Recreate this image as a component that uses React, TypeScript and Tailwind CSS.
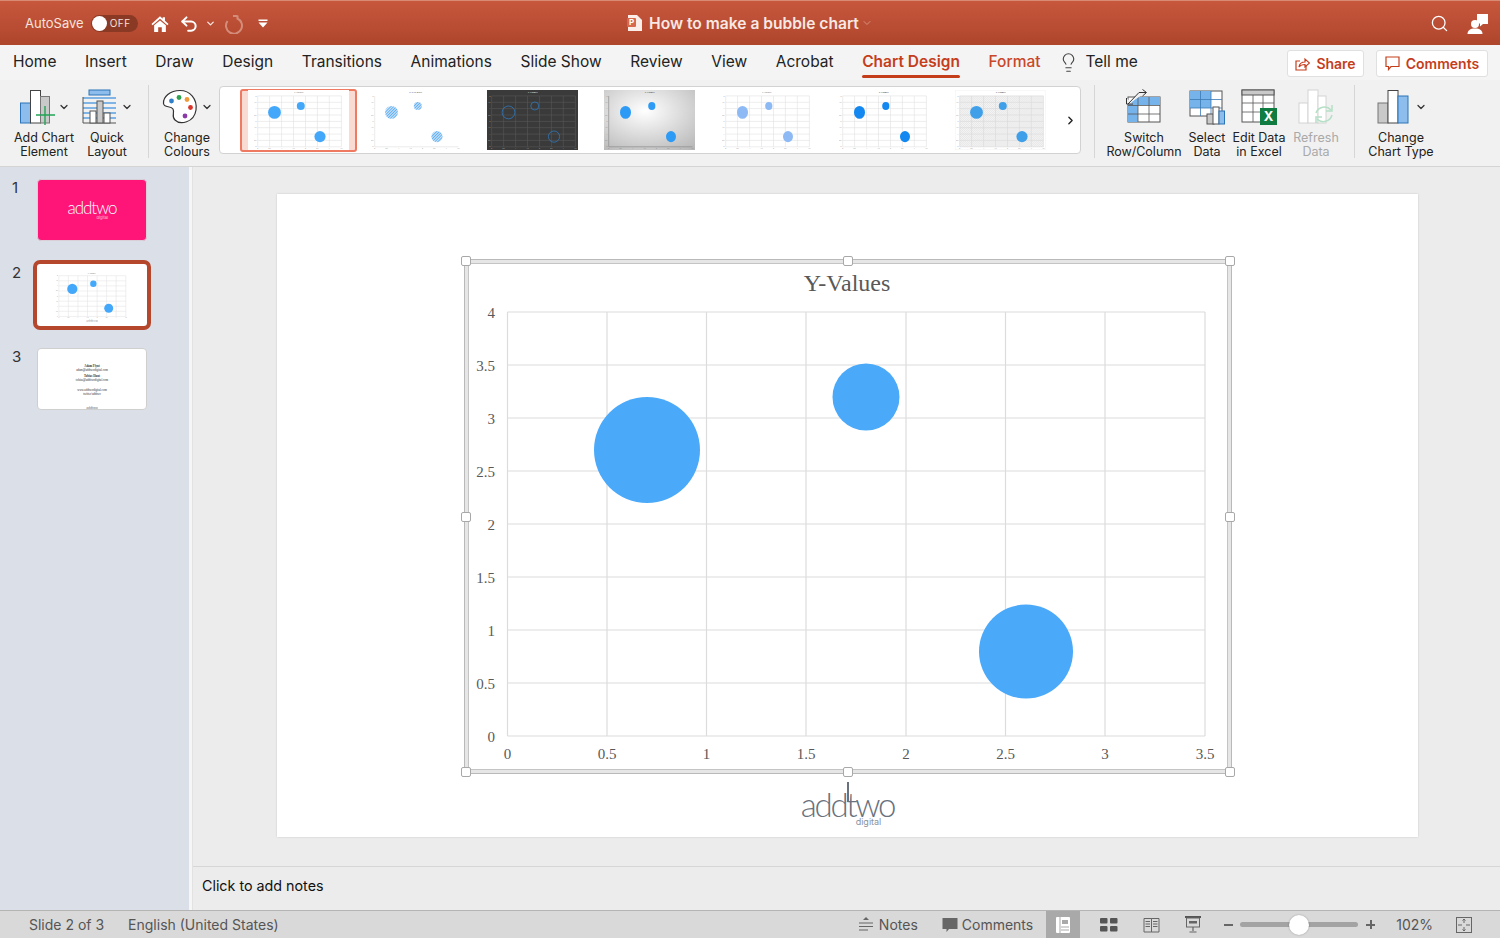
import { ChevronDown, ChevronRight, Lightbulb, Search, Undo2 } from 'lucide-react';
import type { ReactNode } from 'react';

const tabs = ['Home', 'Insert', 'Draw', 'Design', 'Transitions', 'Animations', 'Slide Show', 'Review', 'View', 'Acrobat'];

type Variant = 'plain' | 'hatch' | 'dark' | 'gradient' | 'soft' | 'deep' | 'pattern';

function MiniChart({ variant = 'plain', className = 'w-[91px] h-[60px]' }: { variant?: Variant; className?: string }) {
  const xs = [4.7, 16.6, 28.6, 40.5, 52.5, 64.4, 76.3, 88.4];
  const ys = [5.9, 12.3, 18.6, 25, 31.4, 37.7, 44.1, 50.4, 56.8];
  const dark = variant === 'dark';
  const grid = dark ? '#585858' : variant === 'pattern' ? '#d8d8d8' : '#e0e0e0';
  const text = dark ? '#ccc' : '#777';
  const fills: Record<Variant, string> = {
    plain: '#44a8fa',
    hatch: 'url(#hatchFill)',
    dark: 'none',
    gradient: '#2d9bf5',
    soft: '#8db9f5',
    deep: '#1388f0',
    pattern: '#3f9fe8',
  };
  const stroke = dark ? '#2f78bd' : 'none';
  const narrow = variant === 'gradient' || variant === 'soft' || variant === 'deep';
  return (
    <svg viewBox="0 0 91 60" className={`${className} block`}>
      <defs>
        <pattern id="hatchFill" width="2" height="2" patternUnits="userSpaceOnUse" patternTransform="rotate(45)">
          <rect width="2" height="2" fill="#d3e8fb" />
          <rect width="1" height="2" fill="#62aef2" />
        </pattern>
        <radialGradient id="greyFill" cx="0.45" cy="0.35" r="0.85">
          <stop offset="0" stopColor="#ffffff" />
          <stop offset="1" stopColor="#b4b4b4" />
        </radialGradient>
        <pattern id="dotFill" width="1.4" height="1.4" patternUnits="userSpaceOnUse" patternTransform="rotate(45)">
          <rect width="1.4" height="1.4" fill="#f4f4f4" />
          <rect width="0.5" height="1.4" fill="#e2e2e2" />
        </pattern>
      </defs>
      {dark && <rect width="91" height="60" fill="#3a3a3a" />}
      {variant === 'gradient' && <rect width="91" height="60" fill="url(#greyFill)" />}
      {variant === 'pattern' && <rect x="0.200" y="0.200" width="90.600" height="59.600" fill="#fff" stroke="#eeeeee" strokeWidth="0.400" />}
      {variant === 'pattern' && <rect x="4.700" y="5.900" width="83.700" height="50.900" fill="url(#dotFill)" />}
      {variant !== 'hatch' &&
        variant !== 'gradient' &&
        xs.map((x) => <line key={x} x1={x} x2={x} y1="5.900" y2="56.800" stroke={grid} strokeWidth="0.600" />)}
      {variant !== 'hatch' &&
        variant !== 'gradient' &&
        ys.map((y) => <line key={y} x1="4.700" x2="88.400" y1={y} y2={y} stroke={grid} strokeWidth="0.600" />)}
      {(variant === 'hatch' || variant === 'gradient') && (
        <path d="M4.700 5.900V56.800H88.400" fill="none" stroke={variant === 'gradient' ? '#8c8c8c' : '#e2e2e2'} strokeWidth="0.700" />
      )}
      <ellipse cx="21.500" cy="22.400" rx={narrow ? 5.500 : 6.400} ry="6.400" fill={fills[variant]} stroke={stroke} strokeWidth="0.800" />
      <ellipse cx="47.800" cy="16" rx={narrow ? 3.600 : 4} ry="4" fill={fills[variant]} stroke={stroke} strokeWidth="0.800" />
      <ellipse cx="67" cy="46.600" rx={narrow ? 5 : 5.600} ry="5.600" fill={fills[variant]} stroke={stroke} strokeWidth="0.800" />
      <text x="45.500" y="3.400" textAnchor="middle" fontSize="2.700" fontWeight={variant === 'plain' || variant === 'soft' ? 400 : 700} fill={dark ? '#ddd' : '#555'} fontFamily="'Liberation Serif', serif">
        {variant === 'hatch' ? 'Y-VALUES' : 'Y-Values'}
      </text>
      {['0', '0.5', '1', '1.5', '2', '2.5', '3', '3.5'].map((label, i) => (
        <text key={label} x={xs[i]} y="59.200" textAnchor="middle" fontSize="1.800" fill={text} fontFamily="'Liberation Serif', serif">
          {label}
        </text>
      ))}
      {['4', '3.5', '3', '2.5', '2', '1.5', '1', '0.5', '0'].map((label, i) => (
        <text key={label} x="3.400" y={ys[i] + 0.600} textAnchor="end" fontSize="1.800" fill={text} fontFamily="'Liberation Serif', serif">
          {label}
        </text>
      ))}
    </svg>
  );
}

function AddChartIcon() {
  return (
    <svg width="36" height="36" viewBox="0 0 36 36">
      <rect x="1.500" y="14" width="10" height="20" fill="#8dbdec" stroke="#2b74b8" />
      <rect x="11.500" y="1.500" width="10" height="32.500" fill="#fff" stroke="#444" />
      <rect x="21.500" y="7.500" width="9" height="26.500" fill="#c9c9c9" stroke="#777" />
      <path d="M26 17V36M17 26H36" stroke="#23a455" strokeWidth="1.400" />
    </svg>
  );
}

function QuickLayoutIcon() {
  return (
    <svg width="36" height="36" viewBox="0 0 36 36">
      <rect x="7" y="1" width="21" height="5" fill="#8dbdec" stroke="#2b74b8" />
      <path d="M1 9H34M1 14H34M1 19H34M1 24H34M1 29H34" stroke="#5aa0e0" strokeWidth="1.600" />
      <path d="M1 8V34H34" fill="none" stroke="#555" />
      <rect x="8" y="22" width="6" height="12" fill="#fff" stroke="#555" />
      <rect x="15" y="12" width="6" height="22" fill="#c9c9c9" stroke="#555" />
      <rect x="22" y="24" width="6" height="10" fill="#fff" stroke="#555" />
    </svg>
  );
}

function PaletteIcon() {
  return (
    <svg width="36" height="36" viewBox="0 0 36 36">
      <path
        d="M18 1.500C8 1.500 1 8 1.500 14.500C2 19 9 16.500 11 20C13 24 9 27 13 31C18 36 32 34 34 21C35.500 10 28 1.500 18 1.500Z"
        fill="#fff"
        stroke="#333"
        strokeWidth="1.200"
      />
      <circle cx="9.500" cy="12" r="2.400" fill="#2f80c8" />
      <circle cx="17" cy="8.500" r="2.400" fill="#2ea24f" />
      <circle cx="25" cy="10.500" r="2.400" fill="#f09a3a" />
      <circle cx="28.500" cy="18.500" r="2.400" fill="#d9342b" />
      <circle cx="23" cy="27" r="2.400" fill="#8a3aa8" />
    </svg>
  );
}

function SwitchIcon() {
  return (
    <svg width="36" height="36" viewBox="0 0 36 36">
      <rect x="2" y="8" width="32" height="25" fill="#fff" stroke="#555" />
      <path d="M12 8H34V16H12ZM2 25H12V33H2Z" fill="#76b3ea" />
      <path d="M2 16L12 8V25H2Z" fill="#76b3ea" />
      <path d="M2 16.500H34M2 25H34M12 8V33M23 8V33" stroke="#555" strokeWidth="0.800" />
      <path d="M2 15L13 3.500H20M16.500 0.500L20.500 3.500L16.500 7M0.500 9V15H7" fill="#f1f1f1" stroke="#333" strokeWidth="1" />
    </svg>
  );
}

function SelectDataIcon() {
  return (
    <svg width="36" height="36" viewBox="0 0 36 36">
      <rect x="1" y="2" width="32" height="25" fill="#fff" stroke="#555" />
      <rect x="1" y="2" width="21" height="17" fill="#76b3ea" />
      <path d="M1 10.500H33M1 19H33M11.500 2V27M22 2V27" stroke="#3b78b4" strokeWidth="0.800" />
      <rect x="18" y="25" width="7" height="10" fill="#c9c9c9" stroke="#555" />
      <rect x="24" y="18" width="6" height="17" fill="#fff" stroke="#555" />
      <rect x="30" y="22" width="5.500" height="13" fill="#8dbdec" stroke="#2b74b8" />
    </svg>
  );
}

function ExcelIcon() {
  return (
    <svg width="36" height="36" viewBox="0 0 36 36">
      <rect x="1" y="1" width="32" height="32" fill="#fff" stroke="#555" />
      <rect x="1" y="1" width="32" height="5" fill="#c9c9c9" stroke="#555" />
      <path d="M1 14H33M1 23H33M12 6V33M22 6V33" stroke="#555" strokeWidth="0.800" />
      <rect x="19" y="19" width="17" height="17" fill="#107c41" />
      <text x="27.500" y="32" fontSize="13" fontWeight="700" fill="#fff" textAnchor="middle" fontFamily="Inter, sans-serif">
        X
      </text>
    </svg>
  );
}

function RefreshIcon() {
  return (
    <svg width="36" height="36" viewBox="0 0 36 36">
      <rect x="1" y="14" width="9" height="20" fill="#fff" stroke="#d4d4d4" />
      <rect x="10" y="1" width="10" height="33" fill="#fff" stroke="#d4d4d4" />
      <rect x="20" y="7" width="8" height="27" fill="#fff" stroke="#d4d4d4" />
      <path d="M18 24A9 9 0 0 1 33 21M34 26A9 9 0 0 1 19 30" fill="none" stroke="#b5e0c6" strokeWidth="1.500" />
      <path d="M34 16V22H28M18 34V28H24" fill="none" stroke="#b5e0c6" strokeWidth="1.500" />
    </svg>
  );
}

function ChartTypeIcon() {
  return (
    <svg width="36" height="36" viewBox="0 0 36 36">
      <rect x="2" y="14" width="10" height="20" fill="#c9c9c9" stroke="#777" />
      <rect x="12" y="1.500" width="10" height="32.500" fill="#fff" stroke="#444" />
      <rect x="22" y="7" width="10" height="27" fill="#8dbdec" stroke="#2b74b8" />
    </svg>
  );
}

function RibbonItem({ icon, lines, width, more, muted }: { icon: ReactNode; lines: string[]; width: string; more?: boolean; muted?: boolean }) {
  return (
    <div className={`flex flex-col items-center pt-[9px] shrink-0 ${width}`}>
      <div className="flex items-center h-[36px]">
        {icon}
        {more && <ChevronDown className="w-[12px] h-[12px] ml-[3px] text-[#333]" strokeWidth={2.500} />}
      </div>
      <div className={`mt-[6px] text-center text-[12.500px] leading-[14px] whitespace-nowrap ${muted ? 'text-[#a9a9a9]' : 'text-[#222]'}`}>
        {lines.map((line) => (
          <div key={line}>{line}</div>
        ))}
      </div>
    </div>
  );
}

function Separator({ className }: { className: string }) {
  return <div className={`w-px h-[73px] mt-[5px] bg-[#d6d6d6] shrink-0 ${className}`} />;
}

function TitleBar() {
  return (
    <div className="grid grid-cols-[1fr_auto_1fr] items-center h-[45px] shrink-0 pt-[1px] bg-gradient-to-b from-[#c7573d] to-[#ae462c] border-t border-[#d98a75] text-white">
      <div className="flex items-center pl-[25px]">
        <span className="text-[13px] text-[#f5e3de]">AutoSave</span>
        <div className="flex items-center ml-[7px] w-[47px] h-[17px] rounded-full bg-[#8a3925] pl-[1px]">
          <div className="w-[15px] h-[15px] rounded-full bg-white" />
          <span className="ml-[3px] text-[10px] tracking-[0.5px] text-[#f5e3de]">OFF</span>
        </div>
        <svg width="18" height="18" viewBox="0 0 20 19" className="ml-[13px]">
          <path d="M10 1L0.500 9.500L1.800 11L10 3.800L18.200 11L19.500 9.500L15.500 6V2H13V3.800Z" fill="#fff" />
          <path d="M3.500 11L10 5.500L16.500 11V18.500H12V13H8V18.500H3.500Z" fill="#fff" />
        </svg>
        <Undo2 className="ml-[10px] w-[20px] h-[20px] text-white" strokeWidth={2.400} />
        <ChevronDown className="ml-[6px] w-[11px] h-[11px] text-[#f5e3de]" strokeWidth={3} />
        <svg width="20" height="20" viewBox="0 0 20 20" className="ml-[8px]">
          <path d="M3.500 7A8 8 0 1 0 13.500 4.500M13.500 1.500V5.500M13.500 2H9" fill="none" stroke="#d58d7b" strokeWidth="2" />
        </svg>
        <svg width="10" height="9" viewBox="0 0 10 9" className="ml-[14px]">
          <path d="M0.500 0.500H9.500V2H0.500ZM0.500 3.500H9.500L5 8.500Z" fill="#fff" />
        </svg>
      </div>
      <div className="flex items-center">
        <svg width="16" height="18" viewBox="0 0 16 18">
          <path d="M1 1H10L15 6V17H1Z" fill="#fbeee9" />
          <rect x="0" y="4" width="9" height="9" rx="1" fill="#d9694c" />
          <text x="4.500" y="11" fontSize="8" fontWeight="700" fill="#fff" textAnchor="middle" fontFamily="Inter, sans-serif">
            P
          </text>
        </svg>
        <span className="ml-[6px] text-[15.600px] font-semibold text-[#f8e8e3]">How to make a bubble chart</span>
        <ChevronDown className="ml-[2px] w-[12px] h-[12px] text-[#d9917f]" strokeWidth={2} />
      </div>
      <div className="flex items-center justify-end pr-[11px]">
        <Search className="w-[19px] h-[19px] text-white" strokeWidth={1.600} />
        <svg width="22" height="22" viewBox="0 0 22 22" className="ml-[18px]">
          <path d="M10 1H21V11H16L13 13.500V10.500H10Z" fill="#fff" />
          <circle cx="8" cy="11" r="4" fill="#fff" />
          <path d="M0.500 21C0.500 17.500 3 15.500 8 15.500C13 15.500 15.500 17.500 15.500 21Z" fill="#fff" />
        </svg>
      </div>
    </div>
  );
}

function TabRow() {
  return (
    <div className="flex items-start h-[35px] shrink-0 pl-[13px] pr-[12px] bg-[#f4f4f4]">
      <div className="flex items-center gap-[28.600px] h-[34px] text-[15.500px] text-[#222]">
        {tabs.map((tab) => (
          <span key={tab}>{tab}</span>
        ))}
        <span className="relative font-semibold text-[#c43e1c]">
          Chart Design
          <span className="absolute left-0 right-0 -bottom-[4px] h-[3px] rounded-full bg-[#c43e1c]" />
        </span>
        <span className="font-medium text-[#c9472a]">Format</span>
      </div>
      <div className="flex items-center h-[34px] ml-[18px] text-[15.500px] text-[#222]">
        <Lightbulb className="w-[21px] h-[21px] text-[#444]" strokeWidth={1.300} />
        <span className="ml-[6px]">Tell me</span>
      </div>
      <div className="flex gap-[12px] ml-auto mt-[5px]">
        <button className="flex items-center justify-center w-[77px] h-[27px] rounded-[3px] bg-white border border-[#e0e0e0] text-[14px] font-semibold text-[#c43e1c]">
          <svg width="15" height="14" viewBox="0 0 15 14" className="mr-[6px]">
            <path d="M5 4H1V13H11V9" fill="none" stroke="#c43e1c" strokeWidth="1.200" />
            <path d="M4 10C4.500 6.500 7 5 10 5V2L14.500 6L10 10V7.500C7.500 7.500 5.500 8 4 10Z" fill="none" stroke="#c43e1c" strokeWidth="1.200" />
          </svg>
          Share
        </button>
        <button className="flex items-center justify-center w-[112px] h-[27px] rounded-[3px] bg-white border border-[#e0e0e0] text-[14px] font-semibold text-[#c43e1c]">
          <svg width="15" height="15" viewBox="0 0 15 15" className="mr-[6px]">
            <path d="M1 1H14V10.500H6L3.500 13.500V10.500H1Z" fill="none" stroke="#c43e1c" strokeWidth="1.200" />
          </svg>
          Comments
        </button>
      </div>
    </div>
  );
}

function Gallery() {
  const rest: Variant[] = ['hatch', 'dark', 'gradient', 'soft', 'deep', 'pattern'];
  return (
    <div className="flex items-center ml-[3px] mt-[6px] w-[862px] h-[68px] shrink-0 pl-[20px] rounded-[4px] bg-white border border-[#d2d2d2]">
      <div className="flex items-center justify-center w-[117px] h-[63px] rounded-[3px] border-2 border-[#ee7a62] bg-[#f9dbd4]">
        <div className="bg-white px-[5px]">
          <MiniChart />
        </div>
      </div>
      {rest.map((variant) => (
        <div key={variant} className="flex items-center justify-center w-[117px]">
          <MiniChart variant={variant} />
        </div>
      ))}
      <ChevronRight className="ml-[5px] w-[13px] h-[13px] text-[#222]" strokeWidth={2.500} />
    </div>
  );
}

function Ribbon() {
  return (
    <div className="flex items-start h-[87px] shrink-0 pl-[10px] bg-[#f1f1f1] border-b border-[#d4d4d4]">
      <RibbonItem icon={<AddChartIcon />} lines={['Add Chart', 'Element']} width="w-[68px]" more />
      <RibbonItem icon={<QuickLayoutIcon />} lines={['Quick', 'Layout']} width="w-[58px]" more />
      <Separator className="ml-[12px]" />
      <RibbonItem icon={<PaletteIcon />} lines={['Change', 'Colours']} width="w-[58px] ml-[9px]" more />
      <Gallery />
      <Separator className="ml-[13px]" />
      <RibbonItem icon={<SwitchIcon />} lines={['Switch', 'Row/Column']} width="w-[80px] ml-[9px]" />
      <RibbonItem icon={<SelectDataIcon />} lines={['Select', 'Data']} width="w-[46px]" />
      <RibbonItem icon={<ExcelIcon />} lines={['Edit Data', 'in Excel']} width="w-[58px]" />
      <RibbonItem icon={<RefreshIcon />} lines={['Refresh', 'Data']} width="w-[56px]" muted />
      <Separator className="ml-[10px]" />
      <RibbonItem icon={<ChartTypeIcon />} lines={['Change', 'Chart Type']} width="w-[64px] ml-[14px]" more />
    </div>
  );
}

function Sidebar() {
  return (
    <div className="flex flex-col gap-[22.500px] w-[189px] shrink-0 pt-[12px] bg-[#dbdfe8]">
      <div className="flex">
        <span className="w-[37px] pl-[12px] text-[15px] leading-[18px] text-[#333]">1</span>
        <div className="flex flex-col items-center justify-center w-[110px] h-[62px] rounded-[4px] bg-[#ff1478] border border-[#d9cfd6] text-white">
          <span className="font-['Lato',sans-serif] font-light text-[17px] leading-[16px] tracking-[-1px]">addtwo</span>
          <span className="self-end mr-[38px] text-[4px] leading-[4px] text-[#ffc4dc]">digital</span>
        </div>
      </div>
      <div className="flex">
        <span className="w-[37px] pl-[12px] text-[15px] leading-[18px] text-[#333]">2</span>
        <div className="flex flex-col w-[110px] h-[62px] pt-[7px] pl-[18px] rounded-[3px] bg-white outline-[4px] outline-solid outline-[#b5482c] overflow-hidden">
          <MiniChart className="w-[73px] h-[48px]" />
          <span className="self-center pr-[18px] font-['Lato',sans-serif] font-light text-[3.500px] leading-[4px] text-[#68717d]">addtwo</span>
        </div>
      </div>
      <div className="flex">
        <span className="w-[37px] pl-[12px] text-[15px] leading-[18px] text-[#333]">3</span>
        <div className="flex flex-col items-center w-[110px] h-[62px] pt-[16px] rounded-[4px] bg-white border border-[#cfcfcf] text-[3px] leading-[3.500px] text-[#333] font-['Liberation_Serif',serif]">
          <span className="font-bold">Adam Flynt</span>
          <span>adam@addtwodigital.com</span>
          <span className="font-bold mt-[3px]">Tobias Hunt</span>
          <span>tobias@addtwodigital.com</span>
          <span className="mt-[7px]">www.addtwodigital.com</span>
          <span>twitter/addtwo</span>
          <span className="mt-[11px] font-['Lato',sans-serif] text-[3.500px] text-[#68717d]">addtwo</span>
        </div>
      </div>
    </div>
  );
}

function BubbleChart() {
  const xs = [507.5, 607, 706.5, 806, 906, 1005.5, 1105, 1205];
  const ys = [312, 365, 418, 471, 524, 577, 630, 683, 736];
  const xLabels = ['0', '0.5', '1', '1.5', '2', '2.5', '3', '3.5'];
  const yLabels = ['4', '3.5', '3', '2.5', '2', '1.5', '1', '0.5', '0'];
  return (
    <svg viewBox="469 264 758 505" className="w-[758px] h-[505px] block">
      <text x="847" y="291" textAnchor="middle" fontSize="24" fill="#595959" fontFamily="'Liberation Serif', serif">
        Y-Values
      </text>
      {xs.map((x) => (
        <line key={x} x1={x} x2={x} y1="312" y2="736" stroke="#dcdcdc" strokeWidth="1.200" />
      ))}
      {ys.map((y) => (
        <line key={y} x1="507.5" x2="1205" y1={y} y2={y} stroke="#dcdcdc" strokeWidth="1.200" />
      ))}
      <circle cx="647" cy="450" r="53" fill="#4aa9f9" />
      <circle cx="866" cy="397" r="33.500" fill="#4aa9f9" />
      <circle cx="1026" cy="651.500" r="47" fill="#4aa9f9" />
      {yLabels.map((label, i) => (
        <text key={label} x="495" y={ys[i] + 6} textAnchor="end" fontSize="15" fill="#595959" fontFamily="'Liberation Serif', serif">
          {label}
        </text>
      ))}
      {xLabels.map((label, i) => (
        <text key={label} x={xs[i]} y="759" textAnchor="middle" fontSize="15" fill="#595959" fontFamily="'Liberation Serif', serif">
          {label}
        </text>
      ))}
    </svg>
  );
}

function Handle({ className }: { className: string }) {
  return <div className={`absolute w-[10px] h-[10px] rounded-[2px] bg-white border border-[#a8a8a8] ${className}`} />;
}

function Slide() {
  return (
    <div className="flex flex-col items-center w-[1141px] h-[643px] ml-[84px] mt-[27px] pt-[65px] bg-white shadow-[0_0_2px_rgba(0,0,0,0.15)]">
      <div className="relative w-[768px] h-[515px] p-[3px] bg-[#e6e6e6] border border-[#b9b9b9]">
        <div className="bg-white border border-[#c4c4c4]">
          <BubbleChart />
        </div>
        <Handle className="-left-[4px] -top-[4px]" />
        <Handle className="left-1/2 -translate-x-1/2 -top-[4px]" />
        <Handle className="-right-[4px] -top-[4px]" />
        <Handle className="-left-[4px] top-1/2 -translate-y-1/2" />
        <Handle className="-right-[4px] top-1/2 -translate-y-1/2" />
        <Handle className="-left-[4px] -bottom-[4px]" />
        <Handle className="left-1/2 -translate-x-1/2 -bottom-[4px]" />
        <Handle className="-right-[4px] -bottom-[4px]" />
      </div>
      <div className="relative flex flex-col items-center mt-[17px] text-[#68717d]">
        <span className="font-['Lato',sans-serif] font-light text-[33px] leading-[27px] tracking-[-2.300px]">addtwo</span>
        <span className="ml-[42px] text-[9px] leading-[8px] text-[#8a929c]">digital</span>
        <span className="absolute left-1/2 -top-[9px] w-[1.500px] h-[20px] bg-[#68717d]" />
      </div>
    </div>
  );
}

function StatusBar() {
  return (
    <div className="flex items-center h-[28px] shrink-0 pl-[29px] bg-[#d9d9d9] border-t border-[#b4b4b4] text-[14px] text-[#555]">
      <span>Slide 2 of 3</span>
      <span className="ml-[24px]">English (United States)</span>
      <div className="flex items-center h-full ml-auto">
        <svg width="16" height="15" viewBox="0 0 16 15">
          <path d="M8 0L11 3H5Z" fill="#666" />
          <path d="M1 6H15M1 9.500H15M1 13H10" stroke="#666" strokeWidth="1.200" />
        </svg>
        <span className="ml-[5px]">Notes</span>
        <svg width="16" height="16" viewBox="0 0 16 16" className="ml-[24px]">
          <path d="M0.500 1H15.500V12H7L4.500 15V12H0.500Z" fill="#666" />
        </svg>
        <span className="ml-[4px]">Comments</span>
        <div className="flex items-center justify-center w-[34px] h-full ml-[13px] bg-[#a9a9a9]">
          <svg width="14" height="16" viewBox="0 0 14 16">
            <rect width="14" height="16" rx="1" fill="#fff" />
            <rect x="6" y="3" width="6" height="4" fill="#a9a9a9" />
            <path d="M4 0V16M5 10H13M5 13H13" stroke="#a9a9a9" strokeWidth="1" />
          </svg>
        </div>
        <svg width="18" height="14" viewBox="0 0 18 14" className="ml-[20px]">
          <rect width="7.500" height="5.500" rx="1" fill="#555" />
          <rect x="10" width="7.500" height="5.500" rx="1" fill="#555" />
          <rect y="8" width="7.500" height="5.500" rx="1" fill="#555" />
          <rect x="10" y="8" width="7.500" height="5.500" rx="1" fill="#555" />
        </svg>
        <svg width="17" height="16" viewBox="0 0 17 16" className="ml-[25px]">
          <path d="M1 1.500H8.500V15H1ZM8.500 1.500H16V15H8.500Z" fill="none" stroke="#666" />
          <path d="M2.500 4.500H7M2.500 7H7M2.500 9.500H7M10 4.500H14.500M10 7H14.500M10 9.500H14.500" stroke="#666" />
        </svg>
        <svg width="16" height="17" viewBox="0 0 16 17" className="ml-[25px]">
          <path d="M0 1H16" stroke="#555" strokeWidth="2" />
          <rect x="1.500" y="2" width="13" height="9" fill="none" stroke="#666" />
          <rect x="4" y="5" width="8" height="2.500" fill="#666" />
          <path d="M8 11V15M4.500 16H11.500" stroke="#666" strokeWidth="1.200" />
        </svg>
        <div className="w-[9px] h-[2px] ml-[23px] bg-[#666]" />
        <div className="flex items-center w-[118px] h-[5px] ml-[7px] rounded-full bg-[#a3a3a3]">
          <div className="w-[20px] h-[20px] ml-[49px] rounded-full bg-white shadow-[0_0_2px_rgba(0,0,0,0.3)]" />
        </div>
        <span className="relative w-[9px] h-[9px] ml-[8px]">
          <span className="absolute left-0 top-[3.500px] w-[9px] h-[2px] bg-[#666]" />
          <span className="absolute left-[3.500px] top-0 w-[2px] h-[9px] bg-[#666]" />
        </span>
        <span className="ml-[21px]">102%</span>
        <svg width="16" height="16" viewBox="0 0 16 16" className="ml-[23px] mr-[28px]">
          <rect x="0.500" y="0.500" width="15" height="15" fill="none" stroke="#666" />
          <path d="M8 2V6M6.500 3.500L8 2L9.500 3.500M8 14V10M6.500 12.500L8 14L9.500 12.500M2 8H6M10 8H14" fill="none" stroke="#666" />
        </svg>
      </div>
    </div>
  );
}

export default function App() {
  return (
    <div className="flex flex-col h-screen overflow-hidden bg-[#ececec] font-['Inter',sans-serif]">
      <TitleBar />
      <TabRow />
      <Ribbon />
      <div className="flex flex-1 min-h-0">
        <Sidebar />
        <div className="w-[4px] shrink-0 bg-[#f6f6f6] border-r border-[#e2e2e2]" />
        <div className="flex flex-col flex-1 min-w-0">
          <div className="flex-1 min-h-0">
            <Slide />
          </div>
          <div className="flex items-center h-[44px] shrink-0 pl-[9px] pb-[6px] border-t border-[#d6d6d6] bg-[#ececec] text-[14.300px] text-[#111]">
            Click to add notes
          </div>
        </div>
      </div>
      <StatusBar />
    </div>
  );
}
